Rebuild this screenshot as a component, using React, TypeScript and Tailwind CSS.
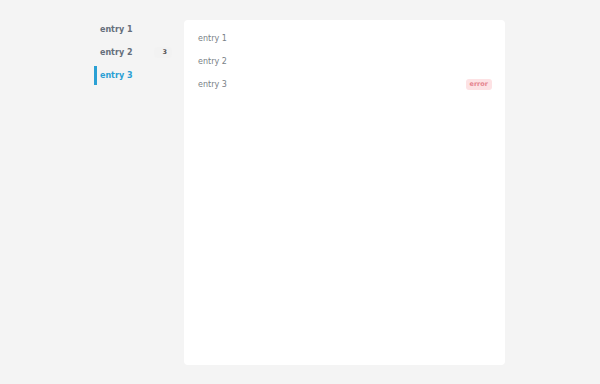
export default function App() {
  const nav = [
    { label: 'entry 1' },
    { label: 'entry 2', count: 3 },
    { label: 'entry 3', active: true },
  ]
  const rows = [{ label: 'entry 1' }, { label: 'entry 2' }, { label: 'entry 3', error: true }]

  return (
    <div className="min-h-[384px] bg-[#f4f4f4] font-['DejaVu_Sans',sans-serif]">
      <div className="ml-[94px] flex w-[411px] gap-3 pt-5 pb-[19px]">
        {/* Sidebar */}
        <nav className="flex w-[78px] shrink-0 flex-col gap-[4px]">
          {nav.map((n) => (
            <div
              key={n.label}
              className={`flex h-[19px] items-center justify-between border-l-[3px] pl-[3px] pr-0 text-[8px] font-bold ${
                n.active ? 'border-[#2aa0d4] text-[#2aa0d4]' : 'border-transparent text-[#646e7b]'
              }`}
            >
              <span>{n.label}</span>
              {n.count && (
                <span className="rounded bg-[#f2f2f2] pl-[8px] pr-[5px] py-[1px] text-[6.5px] text-[#555]">{n.count}</span>
              )}
            </div>
          ))}
        </nav>

        {/* Card */}
        <div className="flex h-[345px] flex-1 flex-col rounded-[4px] bg-white pl-[14px] pr-[13px] pt-[7px]">
          {rows.map((r) => (
            <div key={r.label} className="flex h-[23px] items-center justify-between text-[8px] text-[#7a7f87]">
              <span>{r.label}</span>
              {r.error && (
                <span className="rounded-[3px] bg-[#fde2e4] px-[4px] py-[1px] text-[6.5px] font-bold text-[#e5838d]">
                  error
                </span>
              )}
            </div>
          ))}
        </div>
      </div>
    </div>
  )
}
